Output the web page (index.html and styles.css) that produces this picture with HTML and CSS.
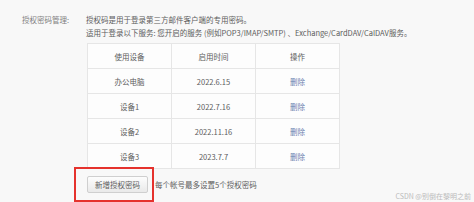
FILE: index.html
```html
<!DOCTYPE html>
<html lang="zh-CN">
<head>
    <meta charset="UTF-8">
    <title>授权密码管理</title>
    <link rel="stylesheet" href="styles.css">
</head>
<body>
    <section class="setting">
        <div class="label">授权密码管理:</div>
        <div class="content">
            <p class="desc">授权码是用于登录第三方邮件客户端的专用密码。</p>
            <p class="desc">适用于登录以下服务: 您开启的服务 (例如POP3/IMAP/SMTP) 、Exchange/CardDAV/CalDAV服务。</p>

            <table class="auth-table">
                <tr>
                    <th>使用设备</th>
                    <th>启用时间</th>
                    <th>操作</th>
                </tr>
                <tr>
                    <td>办公电脑</td>
                    <td>2022.6.15</td>
                    <td><a href="#">删除</a></td>
                </tr>
                <tr>
                    <td>设备1</td>
                    <td>2022.7.16</td>
                    <td><a href="#">删除</a></td>
                </tr>
                <tr>
                    <td>设备2</td>
                    <td>2022.11.16</td>
                    <td><a href="#">删除</a></td>
                </tr>
                <tr>
                    <td>设备3</td>
                    <td>2023.7.7</td>
                    <td><a href="#">删除</a></td>
                </tr>
            </table>

            <div class="actions">
                <button class="btn">新增授权密码</button>
                <span class="hint">每个帐号最多设置5个授权密码</span>
                <div class="mark"></div>
            </div>
        </div>
    </section>

    <div class="watermark">CSDN @别倒在黎明之前</div>
</body>
</html>
```

FILE: styles.css
```css
* {
    margin: 0;
    padding: 0;
    box-sizing: border-box;
}

body {
    font-family: "Noto Sans CJK SC", "Noto Sans", sans-serif;
    font-size: 7.5px;
    background-color: #f8f8f8;
    color: #5c5c5c;
    width: 474px;
    height: 202px;
    overflow: hidden;
    position: relative;
}

.setting {
    display: flex;
    padding-top: 13px;
}

.label {
    width: 86px;
    padding-left: 22px;
    line-height: 13px;
    color: #808080;
}

.desc {
    line-height: 13px;
}

.auth-table {
    margin-top: 4px;
    margin-left: 1px;
    border-collapse: collapse;
    background-color: #fdfdfd;
}

.auth-table th,
.auth-table td {
    width: 84px;
    height: 25px;
    padding: 0;
    border: 1px solid #e6e6e6;
    text-align: center;
    font-weight: normal;
    color: #5c5c5c;
}

.auth-table a {
    color: #6b7fae;
    text-decoration: none;
}

.actions {
    position: relative;
    display: flex;
    align-items: center;
    margin-top: 7px;
    margin-left: 1px;
}

.btn {
    width: 61px;
    height: 17px;
    font-family: inherit;
    font-size: 7.5px;
    color: #5c5c5c;
    border: 1px solid #cfcfcf;
    border-radius: 2px;
    background: linear-gradient(#fdfdfd, #e9e9e9);
}

.hint {
    margin-left: 7px;
}

.mark {
    position: absolute;
    left: -13px;
    top: -9px;
    width: 80px;
    height: 35px;
    border: 2.5px solid #e5322d;
}

.watermark {
    position: absolute;
    right: 3px;
    bottom: 1px;
    font-size: 7px;
    color: #bbb;
}
```
